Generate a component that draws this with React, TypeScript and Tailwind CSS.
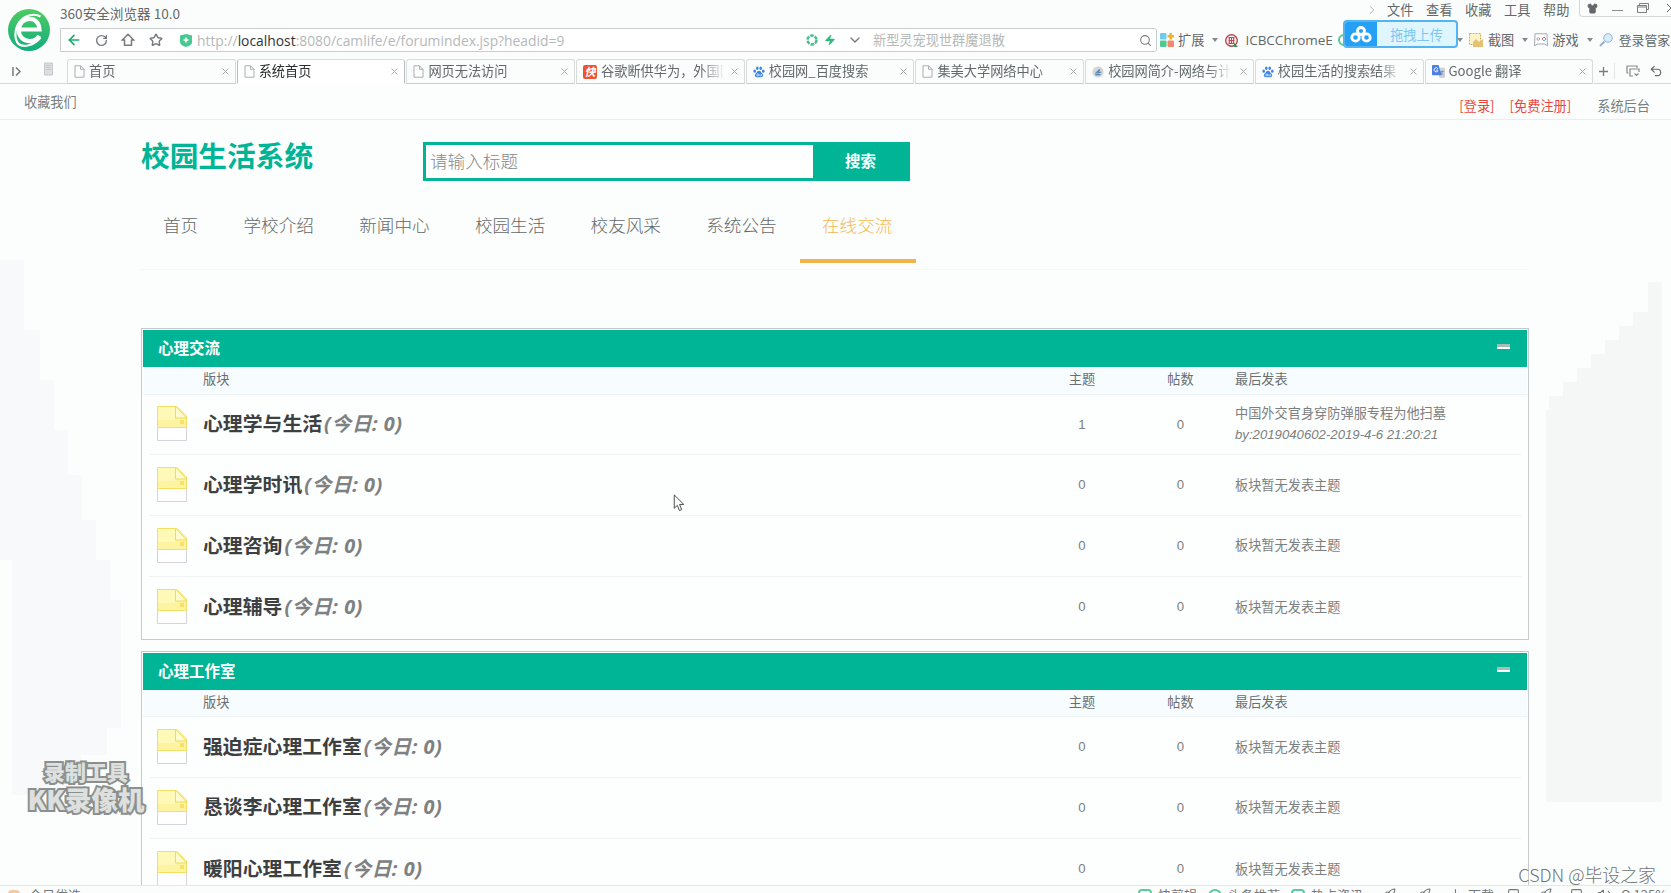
import React from "react";
import {
  ArrowLeft,
  RotateCw,
  Star,
  ChevronDown,
  ChevronRight,
  Search,
  Zap,
  Undo2,
  Shirt,
  Rocket,
  Volume2,
  Square,
  Download,
} from "lucide-react";

type TabIcon = "page" | "kuai" | "baidu" | "globe" | "google";

const tabs: { icon: TabIcon; label: string; active?: boolean }[] = [
  { icon: "page", label: "首页" },
  { icon: "page", label: "系统首页", active: true },
  { icon: "page", label: "网页无法访问" },
  { icon: "kuai", label: "谷歌断供华为，外国网" },
  { icon: "baidu", label: "校园网_百度搜索" },
  { icon: "page", label: "集美大学网络中心" },
  { icon: "globe", label: "校园网简介-网络与计" },
  { icon: "baidu", label: "校园生活的搜索结果" },
  { icon: "google", label: "Google 翻译" },
];

const navItems = ["首页", "学校介绍", "新闻中心", "校园生活", "校友风采", "系统公告", "在线交流"];

interface Board {
  name: string;
  topics: number;
  posts: number;
  last?: { title: string; by: string };
}

const sections: { title: string; boards: Board[] }[] = [
  {
    title: "心理交流",
    boards: [
      {
        name: "心理学与生活",
        topics: 1,
        posts: 0,
        last: { title: "中国外交官身穿防弹服专程为他扫墓", by: "by:2019040602-2019-4-6 21:20:21" },
      },
      { name: "心理学时讯", topics: 0, posts: 0 },
      { name: "心理咨询", topics: 0, posts: 0 },
      { name: "心理辅导", topics: 0, posts: 0 },
    ],
  },
  {
    title: "心理工作室",
    boards: [
      { name: "强迫症心理工作室", topics: 0, posts: 0 },
      { name: "恳谈李心理工作室", topics: 0, posts: 0 },
      { name: "暖阳心理工作室", topics: 0, posts: 0 },
    ],
  },
];

const PawIcon = ({ className }: { className?: string }) => (
  <svg viewBox="0 0 14 14" className={className} fill="#3b86e8">
    <ellipse cx="2" cy="6" rx="1.5" ry="2" />
    <ellipse cx="5" cy="2.6" rx="1.5" ry="2.1" />
    <ellipse cx="9" cy="2.6" rx="1.5" ry="2.1" />
    <ellipse cx="12" cy="6" rx="1.5" ry="2" />
    <path d="M7 5.6c1.800 0 2.300 1.700 3.500 2.800 1.200 1 1.700 2.200 1.100 3.500-.7 1.500-2.500 1.200-4.600 1.200s-3.900.3-4.600-1.200c-.6-1.300-.1-2.500 1.100-3.500C4.700 7.300 5.200 5.600 7 5.600z" />
    <path d="M4.500 9.500h2v2h-2zM8 9.300v2.200h2V9.300" fill="none" stroke="#fff" strokeWidth=".7" />
  </svg>
);

const TabGlyph = ({ icon }: { icon: TabIcon }) => {
  switch (icon) {
    case "kuai":
      return (
        <span className="w-3.5 h-3.5 shrink-0 rounded-[2px] bg-[#ef5236] text-white text-[11px] leading-[13px] font-bold italic text-center">
          快
        </span>
      );
    case "baidu":
      return <PawIcon className="w-3 h-3 shrink-0" />;
    case "globe":
      return (
        <svg viewBox="0 0 14 14" className="w-3 h-3 shrink-0">
          <circle cx="7" cy="7" r="6.500" fill="#d3d6d8" />
          <path d="M4 9l5-5-2 4 4-1M4 10h6" fill="none" stroke="#5484ae" strokeWidth="1.300" />
        </svg>
      );
    case "google":
      return (
        <svg viewBox="0 0 14 14" className="w-[13px] h-[13px] shrink-0">
          <path d="M6 3h7a1 1 0 011 1v9a1 1 0 01-1 1H8z" fill="#cfd3d8" />
          <path d="M1 0h6l3.500 11H1a1 1 0 01-1-1V1a1 1 0 011-1z" fill="#4a80e4" />
          <path d="M6.500 5.500H4.500M6.300 4A2.200 2.200 0 106.500 6" fill="none" stroke="#fff" strokeWidth="1" />
          <path d="M9 7h4M11 6v1c0 2-1 3-2 4M10 8l2.500 3" fill="none" stroke="#7d8a99" strokeWidth=".8" />
        </svg>
      );
    default:
      return (
        <svg viewBox="0 0 11 13" className="w-[11px] h-[13px] shrink-0" fill="#fff" stroke="#a9adb0">
          <path d="M1 .8h5.500L10 4.300v7.900H1zM6.500.8v3.500H10" />
        </svg>
      );
  }
};

const BrowserLogo = () => (
  <svg viewBox="0 0 42 42" className="w-[42px] h-[42px] shrink-0">
    <defs>
      <linearGradient id="logo" x1="0" y1="0" x2="0" y2="1">
        <stop offset="0" stopColor="#4fcb62" />
        <stop offset="1" stopColor="#12ae7d" />
      </linearGradient>
    </defs>
    <circle cx="21" cy="21" r="21" fill="url(#logo)" />
    <path d="M13 20.500h18.500C31 13.500 27 9.800 21.500 9.800c-6 0-10.700 4.800-10.700 11.200 0 6.600 4.500 11.200 11 11.200 4.200 0 7.400-2 9.400-5.400" fill="none" stroke="#fff" strokeWidth="4.200" />
    <path d="M32.500 7.500C27 4.200 17 5.500 11.500 13 6.500 20 6 30 10.500 35c5 3.500 15 2 22-6.500" fill="none" stroke="#fff" strokeWidth="2.200" />
  </svg>
);

const Caret = () => <span className="shrink-0 border-x-[3px] border-x-transparent border-t-[4px] border-t-[#85898a]" />;

const Chrome = () => (
  <div className="relative h-[84px] shrink-0 bg-[#fbfdfd] text-[#63686a] text-[13.2px]">
    <div className="flex h-[59px]">
      <div className="w-[60px] shrink-0 pl-2 pt-[9px]">
        <BrowserLogo />
      </div>
      <div className="flex-1 min-w-0">
        <div className="h-[28px] flex justify-between">
          <span className="pt-[4px] leading-[19px] text-[13.600px]">360安全浏览器 10.0</span>
          <div className="flex whitespace-nowrap leading-5">
            <ChevronRight className="w-3.5 h-3.5 mt-[3px] mr-[8px] text-[#a5a8a9]" strokeWidth={1.5} />
            <div className="flex gap-[13px]">
              {["文件", "查看", "收藏", "工具", "帮助"].map((m) => (
                <span key={m} className="w-[26px]">{m}</span>
              ))}
            </div>
            <div className="ml-[10px] w-[92px] h-[17px] overflow-hidden border-l border-b border-[#d4d7d8] rounded-bl flex items-center">
              <Shirt className="ml-[7px] w-[11px] h-[11px] shrink-0" fill="#63686a" />
              <span className="ml-[14px] w-[11px] h-px shrink-0 bg-[#8a8e90] mt-1" />
              <svg viewBox="0 0 12 10" className="ml-[14px] w-3 h-2.5 shrink-0" fill="none" stroke="#7c8082">
                <path d="M2.500 2.500v-2h9v6h-2M.5 2.500h9v7h-9zM.5 4h9" />
              </svg>
              <svg viewBox="0 0 8 8" className="ml-[18px] w-2 h-2 shrink-0" stroke="#63686a">
                <path d="M0 0l8 8M8 0L0 8" />
              </svg>
            </div>
          </div>
        </div>
        <div className="flex">
          <div className="w-[1097px] h-6 shrink-0 flex items-center border border-[#c9cccd] rounded-r-[3px] bg-white text-[#787c7e]">
            <ArrowLeft className="ml-[5px] w-[16px] h-[16px] text-[#18ac71]" strokeWidth={2.5} />
            <RotateCw className="ml-[13px] w-[13px] h-[13px]" strokeWidth={2.5} />
            <svg viewBox="0 0 14 14" className="ml-[13px] w-3.5 h-3.5" fill="none" stroke="#787c7e" strokeWidth="1.500">
              <path d="M7 1.300L1.200 7H3.500v5.300h7V7h2.300z" />
            </svg>
            <Star className="ml-[14px] w-[14px] h-[14px]" strokeWidth={2.5} />
            <svg viewBox="0 0 12 13" className="ml-[17px] w-3 h-[13px]">
              <path d="M0 1.500L6 0l6 1.500V8c0 2.500-2.500 4-6 5-3.500-1-6-2.500-6-5z" fill="#49c893" />
              <path d="M6 3.500v5M3.500 6h5" stroke="#fff" strokeWidth="1.500" />
            </svg>
            <span className="ml-[5px] mt-px w-[607px] text-[13.850px] leading-5 text-[#b5b8b9] font-['Open_Sans','Noto_Sans_CJK_SC',sans-serif]">
              http://<span className="text-[#303435]">localhost</span>:8080/camlife/e/forumindex.jsp?headid=9
            </span>
            <svg viewBox="0 0 12 12" className="ml-[2px] w-3 h-3 shrink-0">
              <circle cx="6" cy="6" r="4.500" fill="none" stroke="#46be87" strokeWidth="2.500" strokeDasharray="3.600 1.100" />
            </svg>
            <Zap className="ml-[6px] w-3 h-3 shrink-0 text-[#2fba7a]" fill="#2fba7a" strokeWidth={1} />
            <ChevronDown className="ml-[11px] w-[16px] h-[16px] shrink-0" />
            <span className="ml-[10px] flex-1 text-[#b5b8b9]">新型灵宠现世群魔退散</span>
            <Search className="mr-[4px] w-[13px] h-[13px]" />
          </div>
          <div className="ml-[3px] h-6 flex flex-1 min-w-0 items-center whitespace-nowrap">
            <svg viewBox="0 0 14 14" className="w-3.5 h-3.5 shrink-0">
              <rect width="6.500" height="6.500" rx="1" fill="#6fcaf0" />
              <rect y="7.500" width="6.500" height="6.500" rx="1" fill="#4fc98d" />
              <rect x="7.500" y="7.500" width="6.500" height="6.500" rx="1" fill="#f4876b" />
              <path d="M10.700 0v6.500M7.500 3.300H14" stroke="#f0b429" strokeWidth="2.500" />
            </svg>
            <span className="ml-[4px] mr-[8px]">扩展</span>
            <Caret />
            <svg viewBox="0 0 13 13" className="ml-[7px] w-[13px] h-[13px] shrink-0">
              <circle cx="6.500" cy="6.500" r="5.800" fill="#fff" stroke="#b8434e" strokeWidth="1.400" />
              <path d="M3.500 3.500h6M3.500 9.500h6M6.500 3.500v6M4.300 3.500v6M8.700 3.500v6M3.500 6.500h6" stroke="#c7404c" strokeWidth="1.200" />
              <path d="M9 9l4 4H9z" fill="#388c55" />
            </svg>
            <span className="ml-[7px] text-[13.500px] font-['Open_Sans','Noto_Sans_CJK_SC',sans-serif]">ICBCChromeE</span>
            <span className="ml-[5px] w-3 h-3 shrink-0 rounded-full border-2 border-[#58c992]" />
            <span className="w-[107px] shrink-0" />
            <Caret />
            <svg viewBox="0 0 14 14" className="ml-[6px] w-3.5 h-3.5 shrink-0">
              <rect x=".5" y=".5" width="11" height="11" fill="#fdf3c9" stroke="#d8b24c" strokeDasharray="2 1" />
              <path d="M4 14V9l3-3 3 3 4-3v8z" fill="#e3c277" />
            </svg>
            <span className="ml-[5px] mr-[8px]">截图</span>
            <Caret />
            <svg viewBox="0 0 14 14" className="ml-[6px] w-3.5 h-3.5 shrink-0" fill="#fff" stroke="#a3a8ad">
              <path d="M1 .8h12l.5 12-3-1.800h-7L.5 12.800z" />
              <circle cx="4.300" cy="6" r="1.300" />
              <path d="M8 6h1M11 6h1" stroke="#e56b5d" strokeWidth="2" />
              <path d="M10 4v1M10 7v1" stroke="#67a4e0" strokeWidth="2" />
            </svg>
            <span className="ml-[4px] mr-[8px]">游戏</span>
            <Caret />
            <svg viewBox="0 0 14 14" className="ml-[6px] w-3.5 h-3.5 shrink-0">
              <circle cx="9" cy="5" r="4.300" fill="#d9ebfa" stroke="#91b6df" />
              <path d="M5.500 8.500L1 13" stroke="#9fb1c4" strokeWidth="2" />
            </svg>
            <span className="ml-[6px] text-[12.900px]">登录管家</span>
          </div>
        </div>
      </div>
    </div>

    {/* tab strip */}
    <div className="flex h-[25px] items-stretch">
      <div className="w-[67px] shrink-0 flex items-center border-b border-[#d4d8d9]">
        <svg viewBox="0 0 9 9" className="ml-[12px] w-[9px] h-[9px]" fill="none" stroke="#6f7375" strokeWidth="1.400">
          <path d="M1 0v9M4 .5l4 4-4 4" />
        </svg>
        <svg viewBox="0 0 9 13" className="ml-[23px] mb-1 w-[9px] h-[14px]" fill="#dcdfe0" stroke="#c4c8ca">
          <path d="M.5.5h8v12h-8zM2 3h5M2 5h5M2 7h5" />
        </svg>
      </div>
      {tabs.map((t, i) => (
        <div
          key={i}
          className={`w-[168.700px] mr-[1px] shrink-0 flex items-center border border-t-[#d9dcdd] rounded-t-[3px] pl-[6px] pr-[6px] ${
            t.active ? "border-x-[#b9bdbe] border-b-transparent bg-white text-[#2a2d2e]" : "border-x-[#d9dcdd] border-b-[#c9cdce]"
          }`}
        >
          <TabGlyph icon={t.icon} />
          <span className="ml-[4px] mb-[2px] w-[122px] overflow-hidden whitespace-nowrap leading-5 [mask-image:linear-gradient(to_right,black_100px,transparent_124px)]">
            {t.label}
          </span>
          <svg viewBox="0 0 7 7" className="ml-auto w-[7px] h-[7px] shrink-0" stroke="#a9adaf">
            <path d="M.5.5l6 6M6.500.5l-6 6" />
          </svg>
        </div>
      ))}
      <div className="flex-1 flex items-center border-b border-[#d4d8d9]">
        <svg viewBox="0 0 9 9" className="ml-[5px] w-[9px] h-[9px] shrink-0" stroke="#787c7e" strokeWidth="1.300">
          <path d="M4.500 0v9M0 4.500h9" />
        </svg>
        <span className="ml-[6px] w-px h-4 bg-[#e3e6e7]" />
        <svg viewBox="0 0 14 12" className="ml-[11px] w-3.5 h-3 shrink-0" fill="none" stroke="#85898b" strokeWidth="1.200">
          <path d="M2.500 8H1V1h10v2M7 11H4V4h9v3M8.500 8.500l2 2 2-2" />
        </svg>
        <Undo2 className="ml-[9px] w-[14px] h-[14px] shrink-0" />
      </div>
    </div>

    <div className="absolute left-[1343px] top-[20px] w-[115px] h-7 rounded-[4px] border-2 border-[#52b4f0] bg-[#e0f6ff] flex overflow-hidden">
      <div className="w-8 bg-[#25a0f5] flex items-center justify-center">
        <svg viewBox="0 0 22 17" className="w-[22px] h-[17px]" fill="none" stroke="#fff" strokeWidth="2.800">
          <circle cx="11" cy="5" r="3.500" />
          <circle cx="5.500" cy="11.500" r="3.700" />
          <circle cx="16.500" cy="11.500" r="3.700" />
        </svg>
      </div>
      <span className="flex-1 text-center leading-[25px] text-[#7cc6f3]">拖拽上传</span>
    </div>
  </div>
);

const NoteIcon = () => (
  <svg viewBox="0 0 31 36" className="w-[31px] h-9 shrink-0">
    <path d="M.5 21.500h29v13H.5z" fill="#fff" stroke="#d5d4da" />
    <path d="M.5.5H20l9.500 9.500v11.500H.5z" fill="#fff9b8" stroke="#f2e065" />
    <path d="M1 14h17v-4h11v11H1z" fill="#fdf3a0" />
    <path d="M18.500 1v11h11L19 .5" fill="#fffbd0" stroke="#efdc58" />
    <path d="M23 14h4v4h-4z" fill="#f6e26a" />
  </svg>
);

const BoardRow = ({ board }: { board: Board }) => (
  <div className="h-[60.800px] mx-[6px] flex items-center border-b border-[#f0f3f4] last:border-b-0">
    <div className="w-[54px] shrink-0 pl-[8px]">
      <NoteIcon />
    </div>
    <div className="flex-1 text-[19.850px] leading-none whitespace-nowrap">
      <span className="font-bold text-[#3d4041]">{board.name}</span>
      <em className="ml-[2px] font-bold text-[#7d8182] font-['Noto_Sans','Noto_Sans_CJK_SC',sans-serif] tracking-[0.500px]">
        (今日: {board.posts})
      </em>
    </div>
    <span className="w-[98px] text-center">{board.topics}</span>
    <span className="w-[99px] text-center">{board.posts}</span>
    <div className="w-[291px] pl-[5px] leading-[21px]">
      {board.last ? (
        <>
          <p>{board.last.title}</p>
          <p className="italic">{board.last.by}</p>
        </>
      ) : (
        "板块暂无发表主题"
      )}
    </div>
  </div>
);

const ForumSection = ({ title, boards }: { title: string; boards: Board[] }) => (
  <section className="shrink-0 w-[1388px] mb-[11px] border border-[#c5cacc] p-px bg-[#fdfefe] text-[13.200px] text-[#7b7f80]">
    <header className="h-[37px] bg-[#00b496] flex items-center justify-between pl-[15px] pr-[17px]">
      <h2 className="text-[15.500px] font-bold text-white">{title}</h2>
      <span className="w-[13px] h-[5px] mb-1 bg-[#a8bdb9] border-b-2 border-white" />
    </header>
    <div className="h-[27.500px] px-[6px] flex items-center bg-[#f7fdff] border-b border-[#eef4f5] text-[#6a6e70]">
      <span className="flex-1 pl-[54px]">版块</span>
      <span className="w-[98px] text-center">主题</span>
      <span className="w-[99px] text-center">帖数</span>
      <span className="w-[291px] pl-[5px]">最后发表</span>
    </div>
    {boards.map((b) => (
      <BoardRow key={b.name} board={b} />
    ))}
  </section>
);

const StatusBar = () => (
  <div className="h-[8px] shrink-0 relative z-10 overflow-hidden border-t border-[#e1e6e7] bg-[#fbfdfd] text-[13px] leading-[17px] text-[#75797b] flex justify-between">
    <div className="flex pl-[8px]">
      <span className="mt-[4px] w-3 h-3 bg-[#f5c9a2] rounded-sm" />
      <span className="ml-[9px]">今日优选</span>
    </div>
    <div className="flex items-start whitespace-nowrap">
      {["快剪辑", "头条推荐", "热点资讯"].map((s, i) => (
        <div key={s} className="flex mr-[11px]">
          <span className={`mt-[3px] mr-[6px] w-[14px] h-[14px] border-2 border-[#5cc99e] ${i === 1 ? "rounded-full" : "rounded-sm"}`} />
          {s}
        </div>
      ))}
      <Rocket className="mt-0.5 ml-[9px] w-[13px] h-[13px]" />
      <Rocket className="mt-0.5 ml-[22px] w-[13px] h-[13px]" />
      <Download className="mt-0.5 ml-[18px] mr-[6px] w-[13px] h-[13px]" />
      下载
      <Square className="mt-0.5 ml-[13px] w-[13px] h-[13px]" />
      <Rocket className="mt-0.5 ml-[19px] w-[13px] h-[13px]" />
      <Square className="mt-0.5 ml-[18px] w-[13px] h-[13px]" />
      <Volume2 className="mt-0.5 ml-[14px] mr-[10px] w-[14px] h-[14px]" />
      <span className="w-[50px]">Q 125%</span>
    </div>
  </div>
);

export default function App() {
  return (
    <div className="relative w-[1671px] h-[893px] overflow-hidden flex flex-col bg-[#fcfefd] font-['Noto_Sans_CJK_SC',sans-serif]">
      <Chrome />

      <div className="h-9 shrink-0 flex items-start justify-between border-b border-[#e8eeee] pl-[24px] pr-[21px] text-[13.200px] leading-5 text-[#7a7e80]">
        <span className="pt-[8px]">收藏我们</span>
        <div className="flex pt-[12px]">
          <span className="text-[#e9483f]">[登录]</span>
          <span className="ml-[15px] text-[#e9483f]">[免费注册]</span>
          <span className="ml-[26px]">系统后台</span>
        </div>
      </div>

      <div className="flex-1 min-h-0 overflow-hidden flex">
        <div className="w-[141px] shrink-0 pt-[140px]">
          <svg viewBox="0 0 141 545" className="w-[141px] h-[545px]" fill="#f8f9fa">
            <path d="M0 0h24v70h16v50h14v50h14v45h14v45h14v40h14v40h11v128h-14v27h-26v40H12V300H0z" />
          </svg>
        </div>
        <main className="w-[1388px] shrink-0 flex flex-col font-['Liberation_Sans','Noto_Sans_CJK_SC',sans-serif]">
          <div className="h-[70px] shrink-0 flex items-start">
            <h1 className="w-[282px] pt-[16px] text-[28.700px] leading-[42px] font-bold text-[#00b496]">校园生活系统</h1>
            <div className="mt-[22px] w-[487px] h-[39px] flex bg-[#00b496] p-[3px] pr-0">
              <input
                className="w-[387px] bg-white px-[4px] pt-px text-[17.600px] font-light placeholder-[#85898a] outline-none"
                placeholder="请输入标题"
              />
              <button className="flex-1 pr-[2px] pt-px text-white text-[15.500px] font-bold">搜索</button>
            </div>
          </div>
          <nav className="h-[80px] shrink-0 pt-[10px] flex border-b border-[#f5f7f7] text-[17.600px] font-light text-[#64686a]">
            {navItems.map((item) => (
              <a
                key={item}
                className={`h-[63px] pl-[22px] pr-[23.300px] pt-[11px] leading-[30px] ${
                  item === "在线交流" ? "border-b-4 border-[#f0b44b] text-[#f3b755]" : ""
                }`}
              >
                {item}
              </a>
            ))}
          </nav>
          <div className="h-[58px] shrink-0" />
          {sections.map((s) => (
            <ForumSection key={s.title} {...s} />
          ))}
        </main>
        <div className="flex-1 pt-[140px]">
          <svg viewBox="0 0 142 545" className="w-[142px] h-[545px]" fill="#f5f6f6">
            <path d="M17 542V150h3v-14h14v-14h14v-14h14V94h14V80h14V66h14V52h15V22h14v520z" />
          </svg>
        </div>
      </div>

      <StatusBar />

      <svg viewBox="0 0 12 19" className="absolute left-[673px] top-[494px] w-3 h-[18px]" fill="#fff" stroke="#3f4344">
        <path d="M1 1v14l3.300-3 2.200 5.500 2.300-1L6.600 11H11z" />
      </svg>

      {/* recorder watermark */}
      <div className="absolute left-[26px] top-[757px] w-[120px] flex flex-col items-center font-black text-[#dde0df] [-webkit-text-stroke:4px_#8b8f8e] [paint-order:stroke_fill] whitespace-nowrap">
        <p className="text-[21px] leading-[28px]">录制工具</p>
        <p className="text-[26.500px] leading-[28px]">KK录像机</p>
      </div>
      <span className="absolute z-20 right-[15px] top-[862px] text-[17.900px] leading-6 font-light text-[#707475] whitespace-nowrap">
        CSDN @毕设之家
      </span>
    </div>
  );
}
